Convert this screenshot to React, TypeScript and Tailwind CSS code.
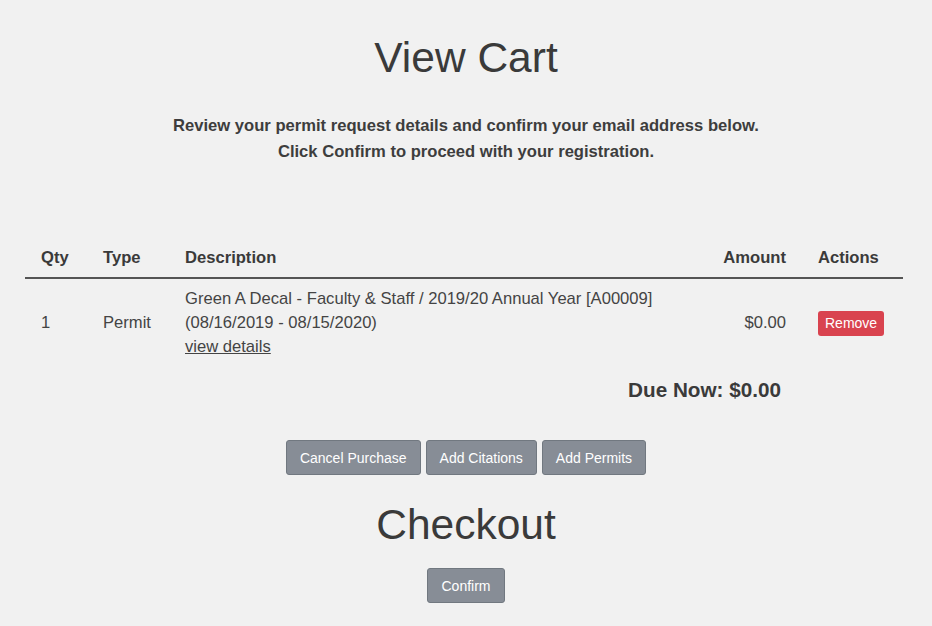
export default function App() {
  const btn =
    'h-[35px] px-[13px] rounded-[3px] border border-[#717880] bg-[#878d96] text-white text-[14px] leading-none'

  return (
    <div className="min-h-screen bg-[#f1f1f1] text-[#444] font-['Liberation_Sans',Arial,sans-serif] pb-6">
      <h1 className="pt-[32px] text-center text-[42.5px] leading-[52px] text-[#3a3a3a]">View Cart</h1>

      <p className="mt-[29px] text-center text-[16.6px] leading-[26px] font-bold text-[#3d3d3d]">
        Review your permit request details and confirm your email address below.
        <br />
        Click Confirm to proceed with your registration.
      </p>

      {/* cart table */}
      <div className="mt-[73px] mx-[25px] w-[878px]">
        <div className="grid grid-cols-[62px_82px_533px_100px_101px] border-b-2 border-[#555] text-[16.6px] leading-[24px] font-bold text-[#3a3a3a]">
          <div className="pl-4 pt-2 pb-[7px]">Qty</div>
          <div className="pl-4 pt-2 pb-[7px]">Type</div>
          <div className="pl-4 pt-2 pb-[7px]">Description</div>
          <div className="pr-4 pt-2 pb-[7px] text-right">Amount</div>
          <div className="pl-4 pt-2 pb-[7px]">Actions</div>
        </div>
        <div className="grid grid-cols-[62px_82px_533px_100px_101px] items-center text-[16.6px] leading-[24px]">
          <div className="pl-4">1</div>
          <div className="pl-4">Permit</div>
          <div className="pl-4 py-2">
            Green A Decal - Faculty &amp; Staff / 2019/20 Annual Year [A00009]
            <br />
            (08/16/2019 - 08/15/2020)
            <br />
            <a href="#" className="underline">view details</a>
          </div>
          <div className="pr-4 text-right">$0.00</div>
          <div className="pl-4">
            <button className="h-[25px] px-[7px] rounded-[3px] bg-[#d9434f] text-white text-[14px] leading-none">
              Remove
            </button>
          </div>
        </div>
      </div>

      <div className="mt-[9px] w-[781px] text-right text-[20.7px] leading-[28px] font-bold text-[#3a3a3a]">
        Due Now: $0.00
      </div>

      <div className="mt-[36px] flex justify-center gap-[5px]">
        <button className={btn}>Cancel Purchase</button>
        <button className={btn}>Add Citations</button>
        <button className={btn}>Add Permits</button>
      </div>

      <h2 className="mt-[24px] text-center text-[42.5px] leading-[52px] text-[#3a3a3a]">Checkout</h2>

      <div className="mt-[17px] flex justify-center">
        <button className={btn}>Confirm</button>
      </div>
    </div>
  )
}
